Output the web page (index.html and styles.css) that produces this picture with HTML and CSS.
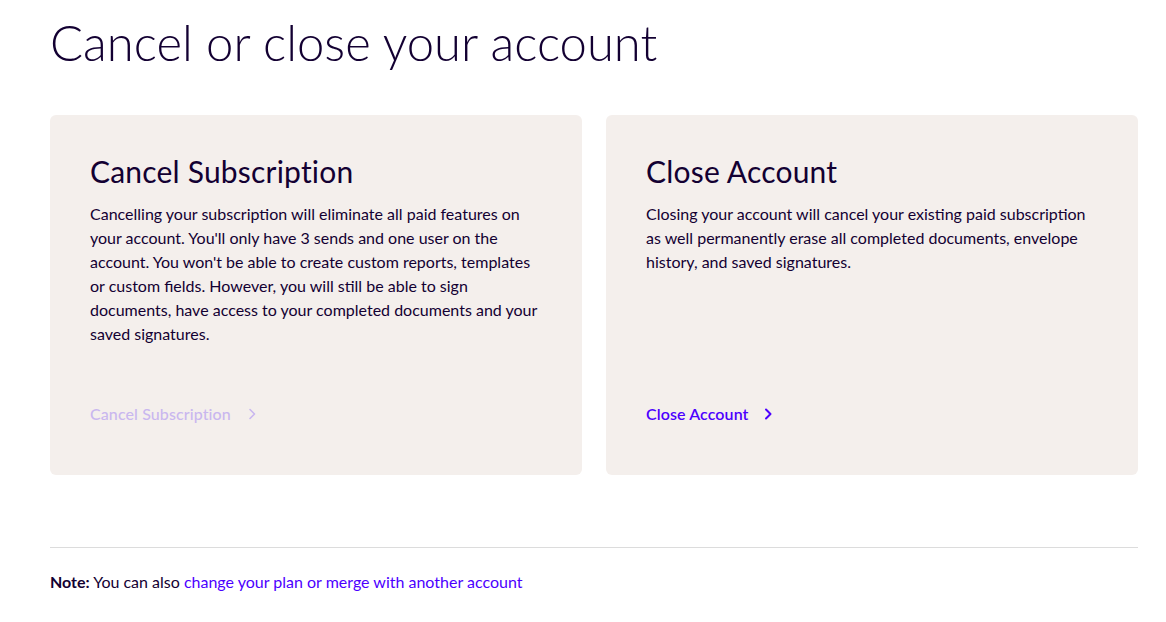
FILE: index.html
```html
<!DOCTYPE html>
<html lang="en">
<head>
<meta charset="utf-8">
<title>Cancel or close your account</title>
<link rel="stylesheet" href="styles.css">
</head>
<body>
<main class="page">
  <h1 class="title">Cancel or close your account</h1>
  <div class="cards">
    <section class="card">
      <h2 class="card-title">Cancel Subscription</h2>
      <p class="card-text">Cancelling your subscription will eliminate all paid features on your account. You'll only have 3 sends and one user on the account. You won't be able to create custom reports, templates or custom fields. However, you will still be able to sign documents, have access to your completed documents and your saved signatures.</p>
      <a class="card-link disabled" href="#">Cancel Subscription
        <svg class="chev" width="16" height="16" viewBox="0 0 16 16"><path d="M6 3.5 L10.5 8 L6 12.5" fill="none" stroke="currentColor" stroke-width="1.6" stroke-linecap="round" stroke-linejoin="round"/></svg>
      </a>
    </section>
    <section class="card">
      <h2 class="card-title">Close Account</h2>
      <p class="card-text">Closing your account will cancel your existing paid subscription as well permanently erase all completed documents, envelope history, and saved signatures.</p>
      <a class="card-link" href="#">Close Account
        <svg class="chev" width="16" height="16" viewBox="0 0 16 16"><path d="M6 3.5 L10.5 8 L6 12.5" fill="none" stroke="currentColor" stroke-width="2" stroke-linecap="round" stroke-linejoin="round"/></svg>
      </a>
    </section>
  </div>
  <hr class="divider">
  <p class="note"><strong>Note:</strong> You can also <a href="#">change your plan or merge with another account</a></p>
</main>
</body>
</html>
```
FILE: styles.css
```css
html, body {
  margin: 0;
  padding: 0;
  background: #ffffff;
}
body {
  font-family: "Lato", "Liberation Sans", sans-serif;
  color: #130032;
}
.page {
  width: 1088px;
  padding: 0 0 0 50px;
}
.title {
  margin: 0;
  padding-top: 14px;
  font-size: 49px;
  font-weight: 300;
  line-height: 56px;
  letter-spacing: 0;
}
.cards {
  display: grid;
  grid-template-columns: 1fr 1fr;
  gap: 24px;
  margin-top: 45px;
}
.card {
  background: #f4efec;
  border-radius: 6px;
  height: 360px;
  box-sizing: border-box;
  padding: 36px 40px 0 40px;
  display: flex;
  flex-direction: column;
}
.card-title {
  margin: 0;
  font-size: 30px;
  font-weight: 400;
  line-height: 40px;
  letter-spacing: 0.2px;
}
.card-text {
  margin: 11px 0 0;
  font-size: 16px;
  line-height: 24px;
  max-width: 456px;
}
.card-link {
  margin-top: auto;
  margin-bottom: 52px;
  display: inline-flex;
  align-items: center;
  gap: 11px;
  align-self: flex-start;
  font-size: 16px;
  font-weight: 600;
  letter-spacing: 0.1px;
  color: #4c00ff;
  text-decoration: none;
}
.card-link.disabled {
  color: #c9b7ef;
  font-weight: 500;
  gap: 13px;
}
.divider {
  margin: 72px 0 0;
  border: 0;
  border-top: 1px solid #dcdcdc;
}
.note {
  margin: 24px 0 0;
  font-size: 16px;
  line-height: 20px;
}
.note strong {
  font-weight: 700;
}
.note a {
  color: #4c00ff;
  text-decoration: none;
}
```
